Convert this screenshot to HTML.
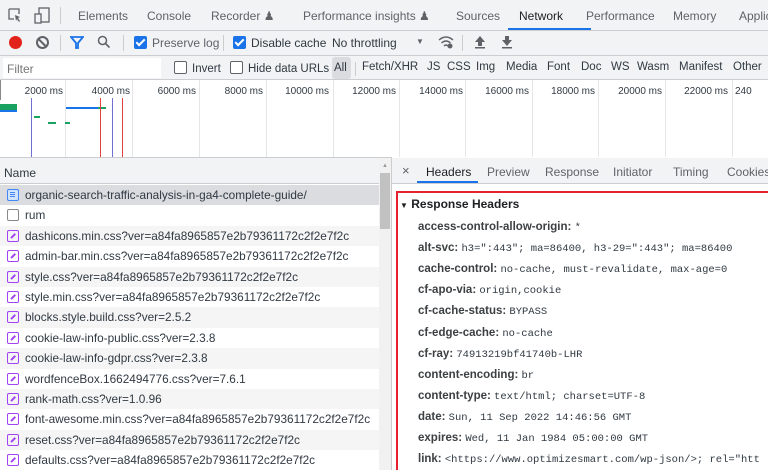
<!DOCTYPE html>
<html><head><meta charset="utf-8"><style>
*{margin:0;padding:0;box-sizing:border-box}
html,body{width:768px;height:470px;overflow:hidden}
body{background:#fff;font-family:"Liberation Sans",sans-serif;font-size:12px;color:#303942;position:relative}
.a{position:absolute;white-space:nowrap}
.bar{position:absolute;left:0;width:768px;background:#f1f3f4;border-bottom:1px solid #cbcdd1}
.tab{position:absolute;top:9px;color:#5f6368;font-size:12px}
.cb{display:inline-block;width:13px;height:13px;border-radius:2px;vertical-align:-2px;margin-right:5px}
.on{background:#1a73e8;position:relative}
.on:after{content:"";position:absolute;left:4px;top:1px;width:3px;height:7px;border:solid #fff;border-width:0 2px 2px 0;transform:rotate(45deg)}
.off{border:1px solid #5f6368;background:#fff}
.row{position:absolute;left:0;width:379px;height:20.4px;line-height:20px;padding-left:25px;color:#303942;font-size:11.8px}
.ic{position:absolute;left:7px;top:4px;width:12px;height:12px;border:1.5px solid #a142f4;border-radius:2px}
.ic:after{content:"";position:absolute;left:2px;top:4px;width:6px;height:1.5px;background:#a142f4;transform:rotate(-45deg)}
.doc{border-color:#4285f4;background:#d2e3fc}
.doc:after{left:2px;top:2px;width:5px;height:1px;background:#4285f4;transform:none;box-shadow:0 2px 0 #4285f4,0 4px 0 #4285f4}
.blank{border:1px solid #888}
.blank:after{display:none}
.g{background:#f5f5f5}
.h{position:absolute;left:418px;font-size:11.5px;font-weight:bold;color:#3c4043;white-space:nowrap}
.h span{font-family:"Liberation Mono",monospace;font-weight:normal;font-size:10.5px;color:#303942}
.gl{position:absolute;top:80px;width:1px;height:77px;background:#e6e6e6}
.tl{position:absolute;top:86px;font-size:10px;color:#303942;text-align:right;width:60px}
.fr{position:absolute;top:61px;font-size:11.5px;color:#303942}
</style></head><body>
<div class="bar" style="top:0;height:31px"></div>
<svg class="a" style="left:8px;top:8px" width="14" height="15" viewBox="0 0 14 15"><path d="M1 1h10v5M1 1v10h5" fill="none" stroke="#5f6368" stroke-width="1.3"/><path d="M7 7l5 2-2 1 2 3-1 1-2-3-1 2z" fill="#5f6368"/></svg>
<svg class="a" style="left:34px;top:7px" width="16" height="17"><rect x="5" y="1" width="10" height="14" fill="none" stroke="#5f6368" stroke-width="1.3"/><rect x="1" y="7" width="6" height="9" fill="#f1f3f4" stroke="#5f6368" stroke-width="1.3"/></svg>
<div class="a" style="left:60px;top:7px;width:1px;height:17px;background:#ccc"></div>
<div class="tab" style="left:78px">Elements</div>
<div class="tab" style="left:147px">Console</div>
<div class="tab" style="left:211px">Recorder ♟</div>
<div class="tab" style="left:303px">Performance insights ♟</div>
<div class="tab" style="left:456px">Sources</div>
<div class="tab" style="left:519px;color:#202124">Network</div>
<div class="a" style="left:508px;top:28px;width:83px;height:2px;background:#1a73e8"></div>
<div class="tab" style="left:586px">Performance</div>
<div class="tab" style="left:673px">Memory</div>
<div class="tab" style="left:739px">Applic</div>
<div class="bar" style="top:31px;height:25px"></div>
<div class="a" style="left:9px;top:36px;width:13px;height:13px;border-radius:50%;background:#e2231a"></div>
<div class="a" style="left:36px;top:36px;width:13px;height:13px;border-radius:50%;border:2px solid #5f6368"><div style="position:absolute;left:-1px;top:3.5px;width:11px;height:2px;background:#5f6368;transform:rotate(45deg)"></div></div>
<div class="a" style="left:60px;top:35px;width:1px;height:16px;background:#ccc"></div>
<svg class="a" style="left:70px;top:36px" width="14" height="13"><path d="M1 1h12L8 7v5H6V7z" fill="none" stroke="#1a73e8" stroke-width="1.8"/></svg>
<svg class="a" style="left:97px;top:35px" width="14" height="14"><circle cx="5.5" cy="5.5" r="4" fill="none" stroke="#5f6368" stroke-width="1.5"/><path d="M8.5 8.5l4 4" stroke="#5f6368" stroke-width="1.6"/></svg>
<div class="a" style="left:123px;top:35px;width:1px;height:16px;background:#ccc"></div>
<div class="a" style="left:134px;top:36px;color:#5f6368"><span class="cb on"></span>Preserve log</div>
<div class="a" style="left:223px;top:35px;width:1px;height:16px;background:#ccc"></div>
<div class="a" style="left:233px;top:36px;color:#303942"><span class="cb on"></span>Disable cache</div>
<div class="a" style="left:332px;top:36px;color:#303942">No throttling</div>
<div class="a" style="left:416px;top:37px;font-size:8px;color:#5f6368">▼</div>
<svg class="a" style="left:438px;top:35px" width="16" height="14"><path d="M1 5q7-6 14 0M3.5 8q4.5-4 9 0M6 11q2-2 4 0" fill="none" stroke="#5f6368" stroke-width="1.4"/><circle cx="12" cy="11" r="2.5" fill="#5f6368"/></svg>
<div class="a" style="left:462px;top:35px;width:1px;height:16px;background:#ccc"></div>
<svg class="a" style="left:474px;top:35px" width="12" height="14"><path d="M6 1L1 7h3v4h4V7h3z" fill="#5f6368"/><rect x="1" y="12" width="10" height="1.5" fill="#5f6368"/></svg>
<svg class="a" style="left:501px;top:35px" width="12" height="14"><path d="M6 11L1 5h3V1h4v4h3z" fill="#5f6368"/><rect x="1" y="12" width="10" height="1.5" fill="#5f6368"/></svg>
<div class="bar" style="top:56px;height:24px"></div>
<div class="a" style="left:3px;top:58px;width:158px;height:20px;background:#fff;padding:4px 4px;color:#757575">Filter</div>
<div class="fr" style="left:174px"><span class="cb off"></span>Invert</div>
<div class="fr" style="left:230px"><span class="cb off"></span>Hide data URLs</div>
<div class="a" style="left:332px;top:57px;width:19px;height:22px;background:#dadce0;border-radius:3px;padding:5px 2px;font-size:11.5px">All</div>
<div class="a" style="left:355px;top:62px;width:1px;height:14px;background:#ccc"></div>
<div class="fr" style="left:362px">Fetch/XHR</div>
<div class="fr" style="left:427px">JS</div>
<div class="fr" style="left:447px">CSS</div>
<div class="fr" style="left:476px">Img</div>
<div class="fr" style="left:506px">Media</div>
<div class="fr" style="left:547px">Font</div>
<div class="fr" style="left:581px">Doc</div>
<div class="fr" style="left:611px">WS</div>
<div class="fr" style="left:637px">Wasm</div>
<div class="fr" style="left:679px">Manifest</div>
<div class="fr" style="left:733px">Other</div>
<div class="a" style="left:0;top:80px;width:1px;height:20px;background:#888"></div>
<div class="gl" style="left:65px"></div><div class="gl" style="left:132px"></div><div class="gl" style="left:199px"></div><div class="gl" style="left:266px"></div><div class="gl" style="left:333px"></div><div class="gl" style="left:399px"></div><div class="gl" style="left:465px"></div><div class="gl" style="left:532px"></div><div class="gl" style="left:598px"></div><div class="gl" style="left:665px"></div><div class="gl" style="left:732px"></div>
<div class="tl" style="left:3px">2000 ms</div><div class="tl" style="left:70px">4000 ms</div><div class="tl" style="left:136px">6000 ms</div><div class="tl" style="left:203px">8000 ms</div><div class="tl" style="left:269px">10000 ms</div><div class="tl" style="left:336px">12000 ms</div><div class="tl" style="left:403px">14000 ms</div><div class="tl" style="left:469px">16000 ms</div><div class="tl" style="left:535px">18000 ms</div><div class="tl" style="left:602px">20000 ms</div><div class="tl" style="left:668px">22000 ms</div><div class="tl" style="left:735px;text-align:left">240</div>
<div class="a" style="left:0;top:104px;width:17px;height:6px;background:#1aa260"></div>
<div class="a" style="left:0;top:110px;width:17px;height:2px;background:#1a73e8"></div>
<div class="a" style="left:66px;top:107px;width:32px;height:2px;background:#1a73e8"></div>
<div class="a" style="left:98px;top:107px;width:8px;height:2px;background:#1aa260"></div>
<div class="a" style="left:34px;top:116px;width:6px;height:2px;background:#1aa260"></div>
<div class="a" style="left:48px;top:122px;width:8px;height:2px;background:#1aa260"></div>
<div class="a" style="left:65px;top:122px;width:5px;height:2px;background:#1aa260"></div>
<div class="a" style="left:31px;top:98px;width:1px;height:59px;background:#7070d0"></div>
<div class="a" style="left:100px;top:98px;width:1px;height:59px;background:#e04040"></div>
<div class="a" style="left:112px;top:98px;width:1px;height:59px;background:#7070d0"></div>
<div class="a" style="left:122px;top:98px;width:1px;height:59px;background:#e04040"></div>
<div class="a" style="left:0;top:157px;width:392px;height:27px;background:#f1f3f4;border-top:1px solid #cbcdd1;border-bottom:1px solid #cbcdd1"></div>
<div class="a" style="left:4px;top:166px;color:#303942">Name</div>
<div class="row" style="top:185px;background:#dadce0"><span class="ic doc"></span>organic-search-traffic-analysis-in-ga4-complete-guide/</div>
<div class="row" style="top:205.4px"><span class="ic blank"></span>rum</div>
<div class="row g" style="top:225.8px"><span class="ic"></span>dashicons.min.css?ver=a84fa8965857e2b79361172c2f2e7f2c</div>
<div class="row" style="top:246.2px"><span class="ic"></span>admin-bar.min.css?ver=a84fa8965857e2b79361172c2f2e7f2c</div>
<div class="row g" style="top:266.6px"><span class="ic"></span>style.css?ver=a84fa8965857e2b79361172c2f2e7f2c</div>
<div class="row" style="top:287px"><span class="ic"></span>style.min.css?ver=a84fa8965857e2b79361172c2f2e7f2c</div>
<div class="row g" style="top:307.4px"><span class="ic"></span>blocks.style.build.css?ver=2.5.2</div>
<div class="row" style="top:327.8px"><span class="ic"></span>cookie-law-info-public.css?ver=2.3.8</div>
<div class="row g" style="top:348.2px"><span class="ic"></span>cookie-law-info-gdpr.css?ver=2.3.8</div>
<div class="row" style="top:368.6px"><span class="ic"></span>wordfenceBox.1662494776.css?ver=7.6.1</div>
<div class="row g" style="top:389px"><span class="ic"></span>rank-math.css?ver=1.0.96</div>
<div class="row" style="top:409.4px"><span class="ic"></span>font-awesome.min.css?ver=a84fa8965857e2b79361172c2f2e7f2c</div>
<div class="row g" style="top:429.8px"><span class="ic"></span>reset.css?ver=a84fa8965857e2b79361172c2f2e7f2c</div>
<div class="row" style="top:450.2px"><span class="ic"></span>defaults.css?ver=a84fa8965857e2b79361172c2f2e7f2c</div>
<div class="a" style="left:379px;top:158px;width:13px;height:312px;background:#f1f1f1"></div>
<div class="a" style="left:382px;top:163px;font-size:6px;color:#999">▲</div>
<div class="a" style="left:380px;top:173px;width:10px;height:56px;background:#c1c1c1"></div>
<div class="a" style="left:391px;top:157px;width:1px;height:313px;background:#cbcdd1"></div>
<div class="a" style="left:392px;top:158px;width:376px;height:26px;background:#f1f3f4;border-bottom:1px solid #cbcdd1"></div>
<div class="a" style="left:402px;top:163px;font-size:13px;color:#5f6368">×</div>
<div class="a" style="left:426px;top:165px;color:#202124">Headers</div>
<div class="a" style="left:417px;top:181px;width:61px;height:2px;background:#1a73e8"></div>
<div class="a" style="left:487px;top:165px;color:#5f6368">Preview</div>
<div class="a" style="left:545px;top:165px;color:#5f6368">Response</div>
<div class="a" style="left:613px;top:165px;color:#5f6368">Initiator</div>
<div class="a" style="left:673px;top:165px;color:#5f6368">Timing</div>
<div class="a" style="left:727px;top:165px;color:#5f6368">Cookies</div>
<div class="a" style="left:396px;top:191px;width:380px;height:290px;border:2px solid #e8212e;border-bottom:none"></div>
<div class="a" style="left:400px;top:197px;font-weight:bold;color:#202124"><span style="font-size:8px">▼</span> Response Headers</div>
<div class="h" style="top:221px">access-control-allow-origin: <span>*</span></div>
<div class="h" style="top:242px">alt-svc: <span>h3=":443"; ma=86400, h3-29=":443"; ma=86400</span></div>
<div class="h" style="top:263px">cache-control: <span>no-cache, must-revalidate, max-age=0</span></div>
<div class="h" style="top:284px">cf-apo-via: <span>origin,cookie</span></div>
<div class="h" style="top:305px">cf-cache-status: <span>BYPASS</span></div>
<div class="h" style="top:327px">cf-edge-cache: <span>no-cache</span></div>
<div class="h" style="top:348px">cf-ray: <span>74913219bf41740b-LHR</span></div>
<div class="h" style="top:369px">content-encoding: <span>br</span></div>
<div class="h" style="top:390px">content-type: <span>text/html; charset=UTF-8</span></div>
<div class="h" style="top:411px">date: <span>Sun, 11 Sep 2022 14:46:56 GMT</span></div>
<div class="h" style="top:432px">expires: <span>Wed, 11 Jan 1984 05:00:00 GMT</span></div>
<div class="h" style="top:453px">link: <span>&lt;https://www.optimizesmart.com/wp-json/&gt;; rel="htt</span></div>
</body></html>
